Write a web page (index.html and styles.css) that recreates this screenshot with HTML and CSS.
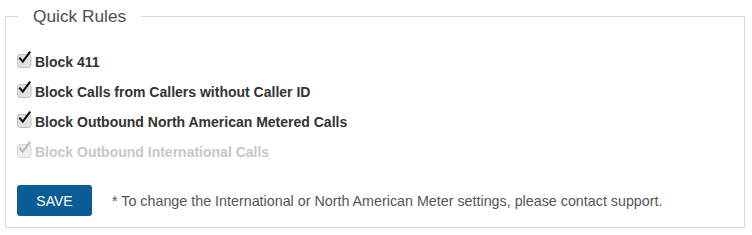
FILE: index.html
```html
<!DOCTYPE html>
<html lang="en">
<head>
  <meta charset="UTF-8" />
  <title>Quick Rules</title>
  <link rel="stylesheet" href="styles.css">
</head>
<body>
  <fieldset class="rules">
    <legend>Quick Rules</legend>

    <label class="rule">
      <span class="check"><svg width="16" height="18" viewBox="0 0 16 18"><rect x="0.5" y="4.5" width="13.5" height="13" rx="2.5" fill="#e2e2e2" stroke="#c2c2c2"/><path d="M2.3 7.6 L5.8 11.6 L13.2 1.6" fill="none" stroke="#111" stroke-width="2.2"/></svg></span>
      Block 411
    </label>
    <label class="rule">
      <span class="check"><svg width="16" height="18" viewBox="0 0 16 18"><rect x="0.5" y="4.5" width="13.5" height="13" rx="2.5" fill="#e2e2e2" stroke="#c2c2c2"/><path d="M2.3 7.6 L5.8 11.6 L13.2 1.6" fill="none" stroke="#111" stroke-width="2.2"/></svg></span>
      Block Calls from Callers without Caller ID
    </label>
    <label class="rule">
      <span class="check"><svg width="16" height="18" viewBox="0 0 16 18"><rect x="0.5" y="4.5" width="13.5" height="13" rx="2.5" fill="#e2e2e2" stroke="#c2c2c2"/><path d="M2.3 7.6 L5.8 11.6 L13.2 1.6" fill="none" stroke="#111" stroke-width="2.2"/></svg></span>
      Block Outbound North American Metered Calls
    </label>
    <label class="rule disabled">
      <span class="check"><svg width="16" height="18" viewBox="0 0 16 18"><rect x="0.5" y="4.5" width="13.5" height="13" rx="2.5" fill="#eeeeee" stroke="#d8d8d8"/><path d="M2.3 7.6 L5.8 11.6 L13.2 1.6" fill="none" stroke="#b8b8b8" stroke-width="2.2"/></svg></span>
      Block Outbound International Calls
    </label>

    <div class="actions">
      <button class="save">SAVE</button>
      <span class="note">* To change the International or North American Meter settings, please contact support.</span>
    </div>
  </fieldset>
</body>
</html>
```

FILE: styles.css
```css
body {
  font-family: "Liberation Sans", Arial, sans-serif;
  background: #fff;
  margin: 0;
  padding: 0;
  color: #333;
}

.rules {
  width: 740px;
  box-sizing: border-box;
  margin: 6px 0 0 5px;
  padding: 20px 11px 11px 11px;
  border: 1px solid #dcdcdc;
  height: 222px;
}

.rules legend {
  font-size: 17.3px;
  color: #4e4e4e;
  padding: 0 15px;
  margin-left: 1px;
}

.rule {
  display: flex;
  align-items: center;
  height: 30px;
  font-size: 14px;
  font-weight: bold;
  color: #333;
}

.rule.disabled {
  color: #c8c8c8;
}

.check {
  display: inline-block;
  width: 16px;
  height: 18px;
  margin-right: 2px;
  margin-top: -7px;
}

.actions {
  display: flex;
  align-items: center;
  margin-top: 18px;
}

.save {
  background: #0b5d98;
  color: #fff;
  border: none;
  border-radius: 3px;
  width: 75px;
  height: 31px;
  font-family: inherit;
  font-size: 14px;
  margin-right: 20px;
}

.note {
  font-size: 14.3px;
  color: #555;
}
```
